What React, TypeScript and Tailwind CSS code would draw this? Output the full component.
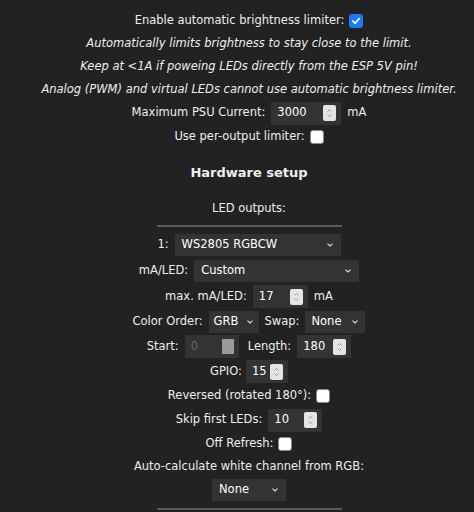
import React from "react";

const Chevron = () => (
  <svg width="8" height="6" viewBox="0 0 8 6" className="shrink-0">
    <path d="M1.8 1.8 L4 4 L6.2 1.8" fill="none" stroke="#d8d8d8" strokeWidth="1.1" strokeLinecap="round" strokeLinejoin="round" />
  </svg>
);

const Spinner = () => (
  <div className="w-[13px] h-[16px] bg-[#e4e4e4] rounded-[2px] flex flex-col items-center justify-center shrink-0">
    <svg width="7" height="12" viewBox="0 0 7 12">
      <path d="M1.5 4.5 L3.5 2.5 L5.5 4.5" fill="none" stroke="#9a9a9a" strokeWidth="1" />
      <path d="M1.5 7.5 L3.5 9.5 L5.5 7.5" fill="none" stroke="#9a9a9a" strokeWidth="1" />
    </svg>
  </div>
);

const NumInput = ({ value, w, disabled }: { value: string; w: string; disabled?: boolean }) => (
  <div className={`${w} h-[23px] bg-[#333333] flex items-center justify-between pl-[6px] pr-[5px]`}>
    <span className={disabled ? "text-[#666]" : "text-white"}>{value}</span>
    {disabled ? <div className="w-[12px] h-[15px] bg-[#9a9a9a]" /> : <Spinner />}
  </div>
);

const Select = ({ value, w, px = "px-[7px]" }: { value: string; w: string; px?: string }) => (
  <div className={`${w} h-[22px] bg-[#333333] flex items-center justify-between ${px}`}>
    <span className="text-white">{value}</span>
    <Chevron />
  </div>
);

const Check = ({ checked }: { checked?: boolean }) =>
  checked ? (
    <div className="w-[14px] h-[14px] rounded-[3px] bg-[#1a7cf5] flex items-center justify-center">
      <svg width="10" height="10" viewBox="0 0 10 10">
        <path d="M2 5.2 L4.1 7.3 L8.2 2.6" fill="none" stroke="white" strokeWidth="1.7" strokeLinecap="round" strokeLinejoin="round" />
      </svg>
    </div>
  ) : (
    <div className="w-[14px] h-[14px] rounded-[3px] bg-white border border-[#8a8a8a]" />
  );

const Row = ({ h, children, gap = "gap-[5px]" }: { h: string; children: React.ReactNode; gap?: string }) => (
  <div className={`${h} flex items-center justify-center ${gap}`}>{children}</div>
);

export default function App() {
  return (
    <div
      className="w-[474px] h-[512px] overflow-hidden bg-[#222222] text-[#eeeeee] text-[11.5px] pl-[24px] pt-[9px]"
      style={{ fontFamily: '"DejaVu Sans", Verdana, sans-serif' }}
    >
      <Row h="h-[23px]">
        <span>Enable automatic brightness limiter:</span>
        <Check checked />
      </Row>
      <Row h="h-[23px]">
        <i>Automatically limits brightness to stay close to the limit.</i>
      </Row>
      <Row h="h-[23px]">
        <i>Keep at &lt;1A if poweing LEDs directly from the ESP 5V pin!</i>
      </Row>
      <Row h="h-[23px]">
        <i>Analog (PWM) and virtual LEDs cannot use automatic brightness limiter.</i>
      </Row>
      <Row h="h-[24px]" gap="gap-[6px]">
        <span>Maximum PSU Current:</span>
        <NumInput value="3000" w="w-[70px]" />
        <span>mA</span>
      </Row>
      <Row h="h-[24px]">
        <span>Use per-output limiter:</span>
        <Check />
      </Row>
      <div className="h-[14px]" />
      <div className="h-[20px] flex items-center justify-center font-bold text-[13px]">Hardware setup</div>
      <div className="h-[15px]" />
      <Row h="h-[22px]">
        <span>LED outputs:</span>
      </Row>
      <div className="mt-[5px] mx-auto w-[185px] h-[2px] bg-[#5a5a5a]" />
      <div className="h-[5px]" />
      <Row h="h-[26px]" gap="gap-[6px]">
        <span>1:</span>
        <Select value="WS2805 RGBCW" w="w-[166px]" />
      </Row>
      <Row h="h-[26px]" gap="gap-[6px]">
        <span>mA/LED:</span>
        <Select value="Custom" w="w-[165px]" />
      </Row>
      <Row h="h-[25px]" gap="gap-[6px]">
        <span>max. mA/LED:</span>
        <NumInput value="17" w="w-[55px]" />
        <span>mA</span>
      </Row>
      <Row h="h-[25px]" gap="gap-[6px]">
        <span>Color Order:</span>
        <Select value="GRB" w="w-[50px]" px="px-[5px]" />
        <span>Swap:</span>
        <Select value="None" w="w-[60px]" px="px-[6px]" />
      </Row>
      <Row h="h-[25px]" gap="gap-[6px]">
        <span>Start:</span>
        <NumInput value="0" w="w-[54px]" disabled />
        <span className="ml-[3px]">Length:</span>
        <NumInput value="180" w="w-[54px]" />
      </Row>
      <Row h="h-[25px]" gap="gap-[4px]">
        <span>GPIO:</span>
        <NumInput value="15" w="w-[42px]" />
      </Row>
      <Row h="h-[24px]">
        <span>Reversed (rotated 180°):</span>
        <Check />
      </Row>
      <Row h="h-[24px]" gap="gap-[6px]">
        <span>Skip first LEDs:</span>
        <NumInput value="10" w="w-[54px]" />
      </Row>
      <Row h="h-[24px]">
        <span>Off Refresh:</span>
        <Check />
      </Row>
      <Row h="h-[21px]">
        <span>Auto-calculate white channel from RGB:</span>
      </Row>
      <Row h="h-[26px]">
        <Select value="None" w="w-[74px]" />
      </Row>
      <div className="mt-[5px] mx-auto w-[185px] h-[2px] bg-[#5a5a5a]" />
    </div>
  );
}
